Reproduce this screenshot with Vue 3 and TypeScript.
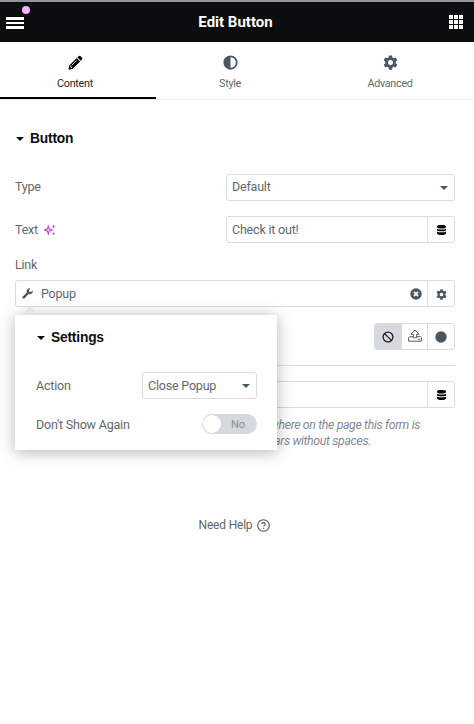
<script setup lang="ts">
import { ref } from 'vue'

type TabId = 'content' | 'style' | 'advanced'
interface Tab { id: TabId; label: string }

const tabs: Tab[] = [
  { id: 'content', label: 'Content' },
  { id: 'style', label: 'Style' },
  { id: 'advanced', label: 'Advanced' },
]
const active = ref<TabId>('content')
const buttonText = ref('Check it out!')
const gear =
  'M6.400.4h3.200l.5 2.200 1.400.8 2.100-.7 1.600 2.800-1.600 1.500v2l1.600 1.500-1.600 2.800-2.100-.7-1.400.8-.5 2.200H6.400l-.5-2.200-1.400-.8-2.100.7-1.600-2.800L2.400 9V7L.8 5.500l1.600-2.800 2.100.7 1.400-.8z M8 5.300a2.700 2.700 0 1 0 0 5.400 2.700 2.700 0 0 0 0-5.400z'
</script>

<template>
  <div class="panel">
    <header class="bar">
      <button class="menu" aria-label="Menu">
        <i></i><i></i><i></i>
        <span class="dot"></span>
      </button>
      <h1>Edit Button</h1>
      <div class="apps"><i v-for="n in 9" :key="n"></i></div>
    </header>

    <nav class="tabs">
      <button v-for="t in tabs" :key="t.id" class="tab" :class="{ on: active === t.id }" @click="active = t.id">
        <svg v-if="t.id === 'content'" class="tab-icon" viewBox="0 0 16 16">
          <path d="M11.300 1.200a1.500 1.500 0 0 1 2.100 0l1.500 1.500a1.500 1.500 0 0 1 0 2.100l-1.300 1.300L10 2.500zM9.300 3.200l3.600 3.600-8.200 8.200-4.200.6.600-4.200z" />
          <path d="M9.300 5.700L4 11M2 11.800l1.200.2.200 1.300 1.100.2" fill="none" stroke="#fff" stroke-width=".9" />
        </svg>
        <svg v-else-if="t.id === 'style'" class="tab-icon" viewBox="0 0 16 16">
          <path fill-rule="evenodd" d="M8 .4a7.600 7.600 0 1 0 0 15.200A7.600 7.600 0 0 0 8 .4zM8 2.300a5.700 5.700 0 0 1 0 11.400z" />
        </svg>
        <svg v-else class="tab-icon" viewBox="0 0 16 16"><path fill-rule="evenodd" :d="gear" /></svg>
        <span>{{ t.label }}</span>
      </button>
    </nav>

    <main class="body">
      <h2 class="section"><b class="caret"></b>Button</h2>

      <div class="row type">
        <label>Type</label>
        <div class="field wide"><span class="value">Default</span><b class="caret soft"></b></div>
      </div>

      <div class="row text">
        <label>Text
          <svg class="spark" viewBox="0 0 12 12">
            <path d="M4.300 2.200L5.300 5l2.800 1-2.800 1-1 2.800L3.300 7 .5 6l2.800-1z" fill="none" stroke="#c13fc4" stroke-width="1.100" />
            <path d="M9.600.6l.5 1.300 1.300.5-1.300.5-.5 1.300-.5-1.300-1.300-.5 1.300-.5zM9.600 7.900l.5 1.300 1.300.5-1.300.5-.5 1.300-.5-1.300-1.300-.5 1.300-.5z" fill="#c13fc4" />
          </svg>
        </label>
        <div class="field wide">
          <span class="value">{{ buttonText }}</span>
          <span class="addon"><svg class="db" viewBox="0 0 10 11"><path d="M0 1.500C0 .6 2 0 5 0s5 .6 5 1.500v1c0 .9-2 1.400-5 1.400S0 3.400 0 2.500zM0 4c1 .7 3 .9 5 .9S9 4.700 10 4v1.700c0 .8-2 1.300-5 1.300S0 6.500 0 5.700zM0 7.200c1 .7 3 .9 5 .9s4-.2 5-.9v2.100C10 10.300 8 11 5 11s-5-.7-5-1.700z" /></svg></span>
        </div>
      </div>

      <label class="link-label">Link</label>
      <div class="link">
        <div class="field">
          <svg class="wrench" viewBox="0 0 12 12"><path d="M11.700 2.600A3.400 3.400 0 0 1 7.200 6.500l-4.600 4.900A1.400 1.400 0 0 1 .6 9.500L5.300 4.800A3.400 3.400 0 0 1 9.400.3L7.500 2.200l.3 1.900 1.900.3z" /></svg>
          <span class="value">Popup</span>
          <svg class="clear" viewBox="0 0 12 12"><circle cx="6" cy="6" r="5.700" /><path d="M3.900 3.900l4.200 4.200M8.100 3.900L3.900 8.100" stroke="#fff" stroke-width="1.600" /></svg>
          <span class="addon"><svg class="cog" viewBox="0 0 16 16"><path fill-rule="evenodd" :d="gear" /></svg></span>
        </div>

        <section class="popover">
          <h3 class="section"><b class="caret"></b>Settings</h3>
          <div class="row action">
            <label>Action</label>
            <div class="field"><span class="value">Close Popup</span><b class="caret soft"></b></div>
          </div>
          <div class="row again">
            <label>Don't Show Again</label>
            <div class="switch"><i></i><span>No</span></div>
          </div>
        </section>
      </div>

      <div class="choices">
        <span class="choice on"><svg viewBox="0 0 12 12"><circle cx="6" cy="6" r="4.900" fill="none" stroke="#1b1f24" stroke-width="1.300" /><path d="M2.600 2.600l6.800 6.800" stroke="#1b1f24" stroke-width="1.300" /></svg></span>
        <span class="choice"><svg class="upload" viewBox="0 0 14 13"><path d="M5.300 8.800V5.200H2.900L7 .9l4.100 4.300H8.700v3.600zM5.200 7.700H1.600L.6 8.700v3.500h12.800V8.700l-1-1H8.800M10 10.300h1.800" fill="none" stroke="#515962" stroke-width="1" stroke-linejoin="round" /></svg></span>
        <span class="choice"><svg viewBox="0 0 12 12"><circle cx="6" cy="6" r="5.700" fill="#4b5661" /></svg></span>
      </div>

      <div class="divider"></div>

      <div class="field id-field">
        <span class="value"></span>
        <span class="addon"><svg class="db" viewBox="0 0 10 11"><path d="M0 1.500C0 .6 2 0 5 0s5 .6 5 1.500v1c0 .9-2 1.400-5 1.400S0 3.400 0 2.500zM0 4c1 .7 3 .9 5 .9S9 4.700 10 4v1.700c0 .8-2 1.300-5 1.300S0 6.500 0 5.700zM0 7.200c1 .7 3 .9 5 .9s4-.2 5-.9v2.100C10 10.300 8 11 5 11s-5-.7-5-1.700z" /></svg></span>
      </div>
      <div class="hint">
        <p>where on the page this form is</p>
        <p class="second">ars without spaces.</p>
      </div>
    </main>

    <footer class="help">Need Help
      <svg viewBox="0 0 14 14"><circle cx="7" cy="7" r="6.200" fill="none" stroke="#515962" stroke-width="1.200" /><path d="M5.200 5.600C5.200 3.300 8.900 3.400 8.900 5.500 8.900 6.900 7.100 6.800 7.100 8.200M7.100 9.300v1.300" fill="none" stroke="#515962" stroke-width="1.200" /></svg>
    </footer>
  </div>
</template>

<style>
body { background: #fff; }
</style>

<style scoped>
.panel, .panel * { box-sizing: border-box; }
.panel { width: 474px; height: 724px; overflow: hidden; font-family: Roboto, "Liberation Sans", sans-serif; font-size: 12.500px; letter-spacing: -.2px; color: #62676c; background: #fff; }
button { border: 0; background: none; padding: 0; font: inherit; letter-spacing: inherit; color: inherit; }
h1, h2, h3, p { margin: 0; }
svg { display: block; fill: #4b5661; flex: none; }

.bar { display: flex; align-items: center; justify-content: space-between; height: 42px; border-top: 2px solid #94979a; background: #0c0d0e; padding: 0 11px 0 6px; }
.bar h1 { color: #fff; font-size: 15px; letter-spacing: 0; font-weight: 700; line-height: 20px; padding-right: 2px; }
.menu { position: relative; display: flex; flex-direction: column; gap: 2px; width: 18px; margin-top: 2px; }
.menu i { height: 2.500px; background: #fff; }
.dot { position: absolute; left: 16px; top: -11px; width: 8px; height: 8px; border-radius: 50%; background: #f2b3fb; }
.apps { display: grid; grid-template-columns: repeat(3, 4px); gap: 1px; }
.apps i { height: 4px; background: #fff; }

.tabs { display: grid; grid-template-columns: 162px 148px 172px; margin-left: -6px; height: 58px; border-bottom: 1px solid #ededee; }
.tab { display: flex; flex-direction: column; align-items: center; padding-top: 13px; height: 57px; font-size: 10.800px; letter-spacing: -.3px; line-height: 14px; border-bottom: 2px solid transparent; }
.tab-icon { width: 15px; height: 15px; margin-bottom: 7px; }
.tab.on { color: #26292c; border-color: #000; }
.tab.on svg { fill: #000; }

.body { padding: 0 19px 0 15px; }
.section { display: flex; align-items: center; gap: 6px; font-family: "Liberation Sans", Arial, sans-serif; font-size: 13.800px; letter-spacing: -.2px; font-weight: 700; color: #0c0d0e; line-height: 20px; }
.caret { border: 4px solid transparent; border-top: 4.500px solid #0c0d0e; border-bottom: 0; }
.caret.soft { border-top-color: #4b5661; margin-right: 6px; }
.body > .section { margin-top: 29px; padding-left: 1px; }
.row { display: flex; align-items: center; justify-content: space-between; }
.row label { display: flex; align-items: center; gap: 6px; }
.type { margin-top: 25px; }
.type label { padding-bottom: 2px; }
.text { margin-top: 15px; }
.field { display: flex; align-items: center; height: 27px; border: 1px solid #d8dbdf; border-radius: 3px; background: #fff; padding-left: 5px; }
.wide { width: 229px; }
.value { flex: 1; line-height: 16px; }
.type .value { padding-bottom: 2px; }
.addon { display: flex; align-items: center; justify-content: center; align-self: stretch; width: 27px; border-left: 1px solid #d8dbdf; }
.db { width: 9px; height: 10px; fill: #000; }
.spark { width: 12px; height: 12px; margin-top: 1px; }
.link-label { display: block; margin-top: 14px; line-height: 16px; }
.link { position: relative; margin-top: 7px; }
.wrench { width: 11px; height: 11px; margin: 0 8px 0 1px; }
.clear { width: 12px; height: 12px; margin-right: 5px; }
.cog { width: 11px; height: 11px; margin-top: 1px; }

.popover { position: absolute; z-index: 2; left: 0; top: 35px; width: 262px; height: 135px; padding: 13px 20px 0 21px; background: #fff; box-shadow: 0 2px 15px rgba(0, 0, 0, .3); }
.popover::before { content: ""; position: absolute; left: 7px; top: -9px; border: 8px solid transparent; border-top: 0; border-bottom: 9px solid #e3e5e7; }
.action { margin-top: 24px; }
.action .field { width: 115px; }
.again { margin-top: 15px; }
.popover .section { padding-left: 1px; }
.switch { display: flex; align-items: center; width: 55px; height: 20px; border-radius: 10px; background: #d5d8dc; font-size: 11px; color: #888f98; }
.switch i { width: 18px; height: 18px; margin: 0 10px 0 1px; border-radius: 50%; background: #fff; }

.choices { display: flex; width: 81px; height: 27px; margin: 16px 0 0 auto; border: 1px solid #d8dbdf; border-radius: 3px; overflow: hidden; }
.choice { flex: 1; display: flex; align-items: center; justify-content: center; }
.choice + .choice { border-left: 1px solid #d8dbdf; }
.choice.on { background: #d5d8dc; }
.choice svg { width: 12px; height: 12px; }
.choice .upload { width: 14px; height: 13px; margin-bottom: 2px; }
.divider { height: 1px; margin-top: 15px; background: #dcdee0; }
.id-field { margin: 15px 0 0 211px; }
.hint { margin-top: 9px; font-size: 12.300px; letter-spacing: -.35px; font-style: italic; line-height: 16px; color: #818a96; text-align: right; padding-right: 35px; }
.hint .second { padding-right: 49px; }

.help { display: flex; align-items: center; justify-content: center; gap: 5px; margin-top: 68px; padding-right: 5px; line-height: 16px; font-size: 12px; }
.help svg { width: 13px; height: 13px; }
</style>
